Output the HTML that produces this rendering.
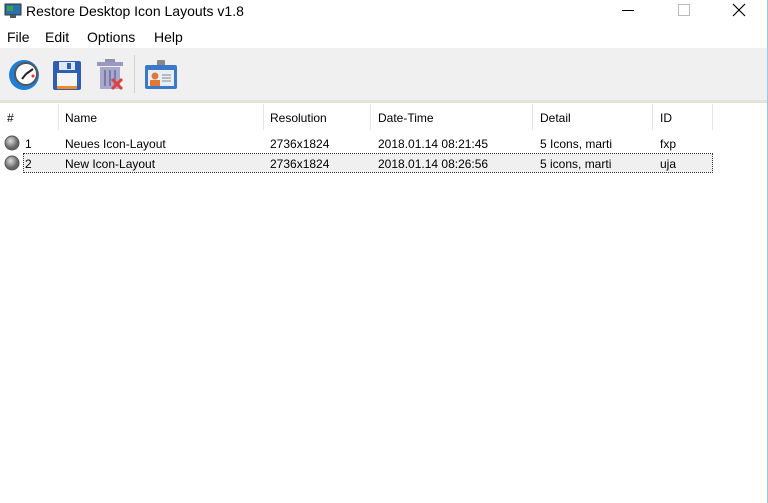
<!DOCTYPE html>
<html><head><meta charset="utf-8">
<style>
*{margin:0;padding:0;box-sizing:border-box}
body{width:768px;height:503px;background:#fff;font-family:"Liberation Sans",Tahoma,sans-serif;position:relative;overflow:hidden;color:#000}
.abs{position:absolute;white-space:nowrap}
.title{left:26px;top:3px;font-size:14px;color:#000}
.menu{top:29px;font-size:14px}
.tb{left:0;top:48px;width:767px;height:52px;background:#f0f0f0}
.tbline{left:0;top:100px;width:767px;height:3px;background:#e6e3da}
.rb{left:767px;top:0;width:1px;height:503px;background:#9ec3e6}
.hd{top:111px;font-size:12px;color:#000}
.div{top:104px;width:1px;height:26px;background:#e5e5e5}
.cell{font-size:12px}
</style></head><body>
<div class="abs rb"></div>
<svg class="abs" style="left:4px;top:3px" width="18" height="16"><rect x="1" y="1" width="16" height="11" fill="#2a6fb0" stroke="#333"/><rect x="3" y="3" width="6" height="5" fill="#3da04a"/><rect x="6" y="12" width="6" height="3" fill="#555"/></svg>
<div class="abs title">Restore Desktop Icon Layouts v1.8</div>
<div class="abs" style="left:622px;top:10px;width:12px;height:1px;background:#000"></div>
<div class="abs" style="left:678px;top:4px;width:12px;height:12px;border:1px solid #bbb"></div>
<svg class="abs" style="left:732px;top:3px" width="14" height="14"><path d="M1 1L13 13M13 1L1 13" stroke="#000" stroke-width="1.2"/></svg>
<div class="abs menu" style="left:7px">File</div>
<div class="abs menu" style="left:45px">Edit</div>
<div class="abs menu" style="left:87px">Options</div>
<div class="abs menu" style="left:154px">Help</div>
<div class="abs tb"></div>
<div class="abs tbline"></div>
<svg class="abs" style="left:5px;top:57px" width="38" height="36"><circle cx="19" cy="18" r="15" fill="#1e7fd6"/><circle cx="21" cy="17" r="11" fill="#fff" stroke="#555" stroke-width="2"/><path d="M21 17L28 12M21 17L17 22" stroke="#222" stroke-width="2"/><circle cx="28" cy="19" r="1.5" fill="#e03030"/></svg>
<svg class="abs" style="left:51px;top:58px" width="32" height="34"><rect x="2" y="3" width="28" height="29" rx="2" fill="#2f5fb0"/><rect x="8" y="4" width="16" height="8" fill="#dfe9f5"/><rect x="16" y="5" width="4" height="6" fill="#2f5fb0"/><rect x="6" y="15" width="20" height="15" fill="#f4f4f4"/><rect x="6" y="28" width="20" height="3" fill="#f08a2a"/></svg>
<svg class="abs" style="left:94px;top:57px" width="34" height="36"><rect x="11" y="2" width="10" height="3" fill="#9090b0"/><rect x="3" y="5" width="26" height="4" fill="#9a9ac0"/><rect x="6" y="10" width="20" height="22" fill="#a8a8cc"/><path d="M11 13V29M16 13V29M21 13V29" stroke="#7a7aa8" stroke-width="2"/><path d="M18 22L28 32M28 22L18 32" stroke="#e04040" stroke-width="3"/></svg>
<div class="abs" style="left:134px;top:55px;width:1px;height:38px;background:#d0d0d0"></div>
<svg class="abs" style="left:143px;top:58px" width="36" height="34"><rect x="14" y="2" width="8" height="6" rx="1" fill="#888"/><rect x="2" y="7" width="32" height="24" rx="2" fill="#3a78c8"/><rect x="5" y="12" width="26" height="16" fill="#e8eef6"/><circle cx="12" cy="18" r="3.5" fill="#e07838"/><rect x="7" y="22" width="10" height="6" fill="#e07838"/><path d="M19 17H28M19 20H28M19 23H28" stroke="#888"/></svg>
<div class="abs hd" style="left:7px">#</div>
<div class="abs div" style="left:58px"></div>
<div class="abs hd" style="left:65px">Name</div>
<div class="abs div" style="left:263px"></div>
<div class="abs hd" style="left:270px">Resolution</div>
<div class="abs div" style="left:370px"></div>
<div class="abs hd" style="left:378px">Date-Time</div>
<div class="abs div" style="left:532px"></div>
<div class="abs hd" style="left:540px">Detail</div>
<div class="abs div" style="left:652px"></div>
<div class="abs hd" style="left:660px">ID</div>
<div class="abs div" style="left:712px"></div>
<div class="abs" style="left:23px;top:153px;width:690px;height:20px;background:#f0f0f0;border:1px dotted #333"></div>
<svg class="abs" style="left:4px;top:135px" width="16" height="16"><defs><radialGradient id="g" cx="40%" cy="35%"><stop offset="0" stop-color="#ddd"/><stop offset="1" stop-color="#666"/></radialGradient></defs><circle cx="8" cy="8" r="7" fill="url(#g)" stroke="#555"/></svg>
<svg class="abs" style="left:4px;top:155px" width="16" height="16"><circle cx="8" cy="8" r="7" fill="url(#g)" stroke="#555"/></svg>
<div class="abs cell" style="left:25px;top:137px">1</div>
<div class="abs cell" style="left:65px;top:137px">Neues Icon-Layout</div>
<div class="abs cell" style="left:270px;top:137px">2736x1824</div>
<div class="abs cell" style="left:378px;top:137px">2018.01.14 08:21:45</div>
<div class="abs cell" style="left:540px;top:137px">5 Icons, marti</div>
<div class="abs cell" style="left:660px;top:137px">fxp</div>
<div class="abs cell" style="left:25px;top:157px">2</div>
<div class="abs cell" style="left:65px;top:157px">New Icon-Layout</div>
<div class="abs cell" style="left:270px;top:157px">2736x1824</div>
<div class="abs cell" style="left:378px;top:157px">2018.01.14 08:26:56</div>
<div class="abs cell" style="left:540px;top:157px">5 icons, marti</div>
<div class="abs cell" style="left:660px;top:157px">uja</div>
</body></html>
